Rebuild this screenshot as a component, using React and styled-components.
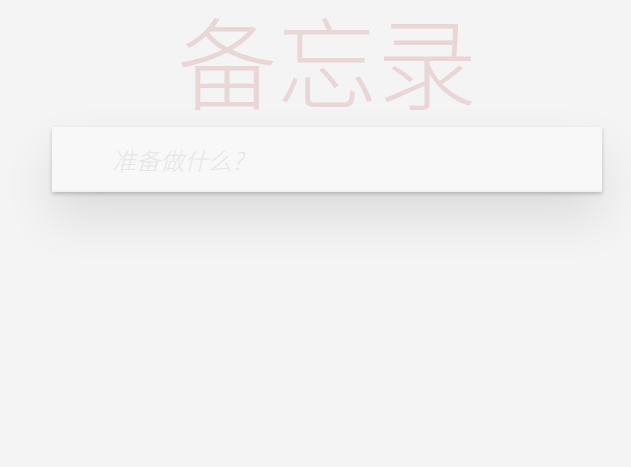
import styled, { createGlobalStyle } from "styled-components";

const GlobalStyle = createGlobalStyle`
  html, body {
    margin: 0;
    padding: 0;
  }
  body {
    background: #f4f4f4;
    font-family: "Helvetica Neue", "Liberation Sans", "Noto Sans CJK SC", sans-serif;
    color: #4d4d4d;
  }
`;

export default function App() {
  return (
    <Page>
      <GlobalStyle />
      <TodoApp>
        <Title>备忘录</Title>
        <NewTodo placeholder="准备做什么?" autoComplete="off" />
      </TodoApp>
    </Page>
  );
}

const Page = styled.div`
  min-height: 467px;
  padding-top: 2px;
  padding-left: 52px;
`;

const TodoApp = styled.section`
  width: 550px;
  display: flex;
  flex-direction: column;
`;

const Title = styled.h1`
  margin: 0 0 11px;
  text-align: center;
  font-family: "Noto Sans CJK SC", sans-serif;
  font-size: 100px;
  font-weight: 300;
  line-height: 114px;
  color: rgba(175, 47, 47, 0.15);
`;

const NewTodo = styled.input`
  box-sizing: border-box;
  width: 100%;
  height: 65px;
  margin: 0;
  padding: 16px 16px 16px 60px;
  border: none;
  outline: none;
  background: #f8f8f8;
  font-family: "Noto Sans CJK SC", sans-serif;
  font-size: 24px;
  color: #4d4d4d;
  box-shadow: inset 0 -2px 1px rgba(0, 0, 0, 0.03), 0 2px 4px rgba(0, 0, 0, 0.2),
    0 25px 50px rgba(0, 0, 0, 0.1);

  &::placeholder {
    font-style: italic;
    font-weight: 300;
    color: #e6e6e6;
  }
`;
